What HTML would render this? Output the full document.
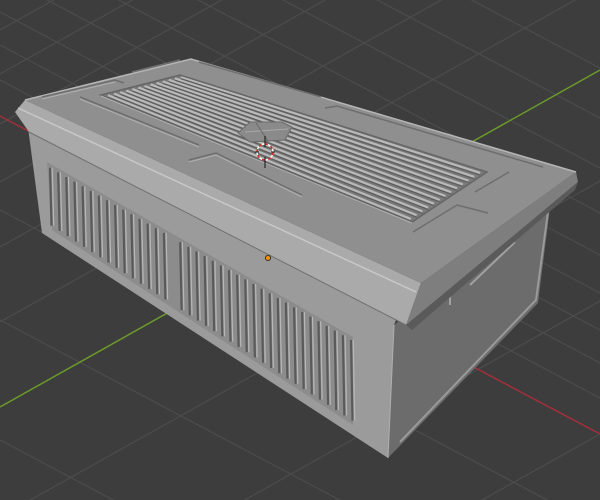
<!DOCTYPE html>
<html><head><style>
html,body{margin:0;padding:0;background:#3d3d3d;overflow:hidden;width:600px;height:500px}
svg{display:block}
</style></head><body>
<svg width="600" height="500" viewBox="0 0 600 500" xmlns="http://www.w3.org/2000/svg">
<rect width="600" height="500" fill="#3d3d3d"/>
<g stroke="#4c4c4c" stroke-width="1.2" fill="none">
<line x1="0" y1="-73" x2="600" y2="-409"/>
<line x1="0" y1="-43" x2="600" y2="-379"/>
<line x1="0" y1="-8" x2="600" y2="-344"/>
<line x1="0" y1="30" x2="600" y2="-306"/>
<line x1="0" y1="74" x2="600" y2="-262"/>
<line x1="0" y1="124" x2="600" y2="-212"/>
<line x1="0" y1="182" x2="600" y2="-154"/>
<line x1="0" y1="247" x2="600" y2="-89"/>
<line x1="0" y1="322" x2="600" y2="-14"/>
<line x1="0" y1="517" x2="600" y2="181"/>
<line x1="0" y1="637" x2="600" y2="301"/>
<line x1="0" y1="770" x2="600" y2="434"/>
<line x1="0" y1="915" x2="600" y2="579"/>
<line x1="0" y1="-250" x2="600" y2="68"/>
<line x1="0" y1="-200" x2="600" y2="118"/>
<line x1="0" y1="-150" x2="600" y2="168"/>
<line x1="0" y1="-105" x2="600" y2="213"/>
<line x1="0" y1="-63" x2="600" y2="255"/>
<line x1="0" y1="-25" x2="600" y2="293"/>
<line x1="0" y1="12" x2="600" y2="330"/>
<line x1="0" y1="45" x2="600" y2="363"/>
<line x1="0" y1="80" x2="600" y2="398"/>
<line x1="0" y1="210" x2="600" y2="528"/>
<line x1="0" y1="320" x2="600" y2="638"/>
<line x1="0" y1="440" x2="600" y2="758"/>
</g>
<line x1="0" y1="407" x2="600" y2="70" stroke="#6c9a2a" stroke-width="1.5"/>
<line x1="0" y1="116" x2="600" y2="434" stroke="#a0303c" stroke-width="1.5"/>

<!-- body front face -->
<polygon points="27,120 400,310 394,325 388,458 42,233" fill="#9b9b9b"/>
<!-- body right face -->
<polygon points="394,325 551,200 538,303 388,458" fill="#6c6c6c"/>
<polyline points="548,212 536,300 400,442" fill="none" stroke="#9a9a9a" stroke-width="2"/>
<line x1="470" y1="285" x2="515" y2="242" stroke="#a0a0a0" stroke-width="2"/>
<line x1="450" y1="287" x2="450" y2="305" stroke="#a0a0a0" stroke-width="2"/>
<line x1="388" y1="458" x2="394" y2="325" stroke="#b0b0b0" stroke-width="1"/>

<!-- vents -->
<polygon points="47,162 353,337 353,425 52,230" fill="#8c8c8c"/>
<g id="slats" stroke="#5a5a5a" stroke-width="2.2"></g>

<!-- lid front chamfer -->
<polygon points="15,112 25,100 421,283 406,325 29,132" fill="#aaaaaa"/>
<line x1="18" y1="108" x2="416" y2="292" stroke="#c8c8c8" stroke-width="1.5"/>
<line x1="29" y1="132" x2="406" y2="325" stroke="#707070" stroke-width="1"/>
<!-- lid right side -->
<polygon points="421,283 576,172 578,182 406,325" fill="#7e7e7e"/>
<polygon points="406,325 578,182 575,190 412,330" fill="#5a5a5a"/>
<!-- lid top -->
<polygon points="25,100 191,59 576,172 421,283" fill="#8f8f8f"/>
<polyline points="25,100 191,59 576,172" fill="none" stroke="#b5b5b5" stroke-width="1.5"/>
<g stroke="#6e6e6e" stroke-width="1.5" fill="none">
<polyline points="42,97 115,80 124,83"/>
<line x1="132" y1="72" x2="180" y2="60"/>
<line x1="199" y1="62" x2="321" y2="97"/>
<polyline points="325,108 337,106 543,167"/>
<line x1="475" y1="192" x2="509" y2="172"/>
<polyline points="488,213 457,205 413,232"/>
<polyline points="302,195 216,153 189,160"/>
<line x1="80" y1="97" x2="199" y2="145"/>
</g>
<g stroke="#b0b0b0" stroke-width="1" fill="none">
<polyline points="42,99 115,82"/>
<line x1="80" y1="99" x2="199" y2="147"/>
<polyline points="189,162 216,155 302,197"/>
</g>
<!-- ribbed panel -->
<polygon points="101,95 180,75 487,172 412,222" fill="#7a7a7a"/>
<g stroke="#b9b9b9" stroke-width="2.2" id="ribs"></g>
<polygon points="101,95 180,75 487,172 412,222" fill="none" stroke="#666" stroke-width="1.5"/>
<line x1="101" y1="96" x2="412" y2="223" stroke="#b0b0b0" stroke-width="1"/>
<!-- emblem -->
<polygon points="238,133 250,122 282,122 292,127 285,140 250,142" fill="#8a8a8a" stroke="#6a6a6a" stroke-width="1"/>
<line x1="245" y1="132" x2="288" y2="129" stroke="#a8a8a8" stroke-width="1"/>
<line x1="256" y1="123" x2="268" y2="141" stroke="#6a6a6a" stroke-width="1"/>
<!-- 3D cursor -->
<circle cx="265" cy="152" r="8" fill="none" stroke="#ffffff" stroke-width="1.5"/>
<circle cx="265" cy="152" r="8" fill="none" stroke="#d02020" stroke-width="1.5" stroke-dasharray="3.1 3.1"/>
<line x1="265" y1="136" x2="265" y2="147" stroke="#111" stroke-width="1"/>
<line x1="265" y1="157" x2="265" y2="168" stroke="#111" stroke-width="1"/>
<line x1="255" y1="152" x2="259" y2="152" stroke="#111" stroke-width="1"/>
<line x1="271" y1="152" x2="275" y2="152" stroke="#111" stroke-width="1"/>
<circle cx="268" cy="258" r="2.6" fill="#f0900a" stroke="#222" stroke-width="0.8"/>
</svg>
<script>
(function(){
 var ns="http://www.w3.org/2000/svg";
 var s=document.getElementById('slats');
 var n=38;
 for(var i=0;i<n;i++){
  var t=i/(n-1);
  var x=50+t*(351-50);
  if(x>165&&x<175)continue;
  var yt=163+(x-47)*(175/306)+3;
  var yb=230+(x-52)*(195/301)-3;
  var l=document.createElementNS(ns,'line');
  l.setAttribute('x1',x);l.setAttribute('y1',yt);
  l.setAttribute('x2',x+1.5);l.setAttribute('y2',yb);
  s.appendChild(l);
  var h=document.createElementNS(ns,'line');
  h.setAttribute('x1',x+2.2);h.setAttribute('y1',yt);
  h.setAttribute('x2',x+3.7);h.setAttribute('y2',yb);
  h.setAttribute('stroke','#b8b8b8');h.setAttribute('stroke-width','1.2');
  s.appendChild(h);
 }
 var r=document.getElementById('ribs');
 var m=13;
 for(var j=0;j<m;j++){
  var u=(j+0.5)/m;
  var ax=101+u*(180-101), ay=95+u*(75-95);
  var bx=412+u*(487-412), by=222+u*(172-222);
  var L=document.createElementNS(ns,'line');
  L.setAttribute('x1',ax+4);L.setAttribute('y1',ay+1);
  L.setAttribute('x2',bx-4);L.setAttribute('y2',by-1);
  r.appendChild(L);
  var D=document.createElementNS(ns,'line');
  D.setAttribute('x1',ax+4);D.setAttribute('y1',ay+3);
  D.setAttribute('x2',bx-4);D.setAttribute('y2',by+1);
  D.setAttribute('stroke','#5e5e5e');D.setAttribute('stroke-width','1.2');
  r.appendChild(D);
 }
})();
</script>
</body></html>
